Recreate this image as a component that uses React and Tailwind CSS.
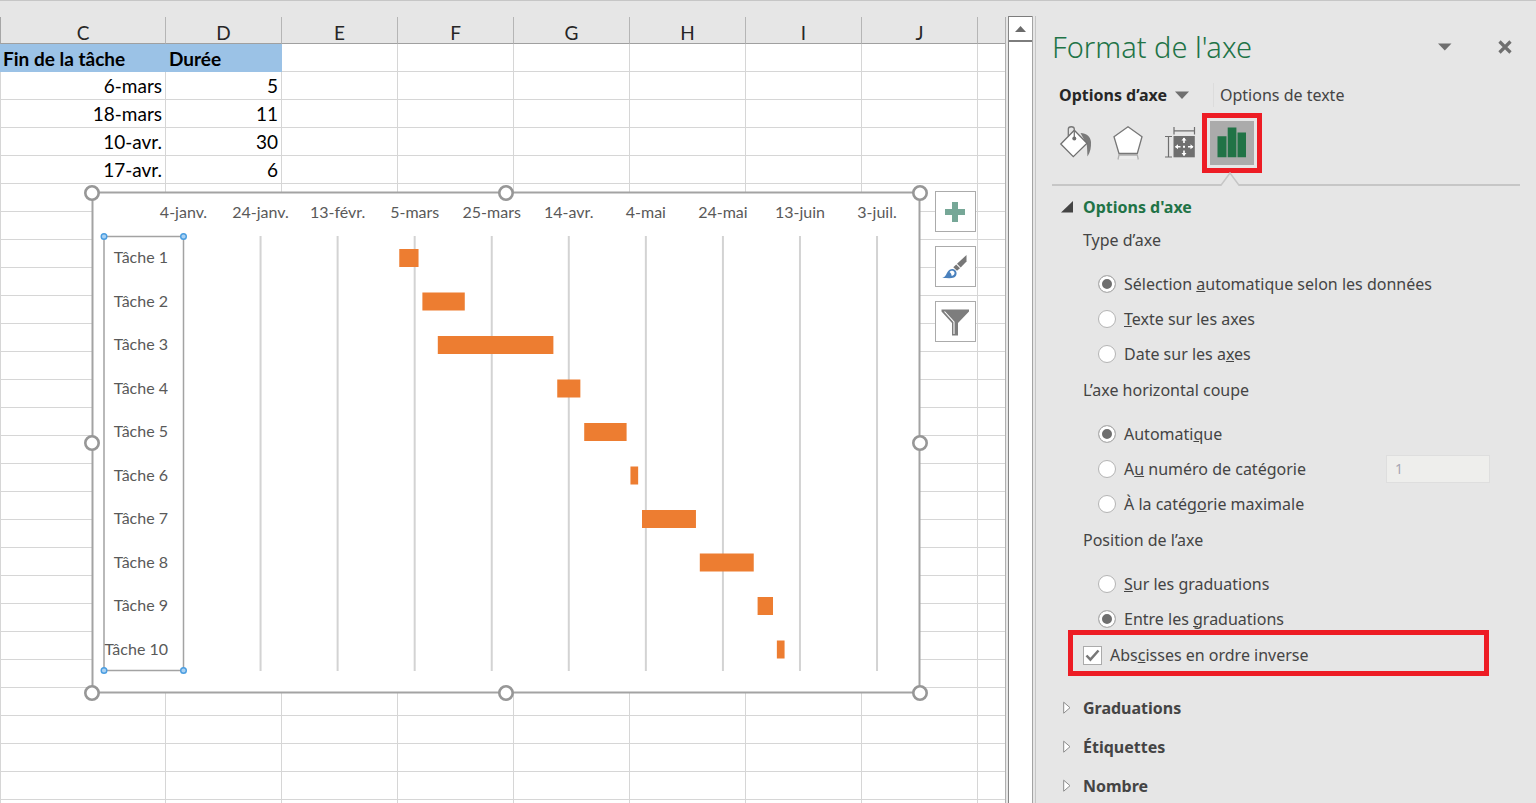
import { useState } from 'react'

const COLUMNS = ['C', 'D', 'E', 'F', 'G', 'H', 'I', 'J']
const ROWS = [
  ['6-mars', '5'],
  ['18-mars', '11'],
  ['10-avr.', '30'],
  ['17-avr.', '6'],
]
const EMPTY_ROWS = 23

const TICKS = ['4-janv.', '24-janv.', '13-févr.', '5-mars', '25-mars', '14-avr.', '4-mai', '24-mai', '13-juin', '3-juil.']

// start is counted in days from the first tick
const TASKS = [
  { name: 'Tâche 1', start: 56, days: 5 },
  { name: 'Tâche 2', start: 62, days: 11 },
  { name: 'Tâche 3', start: 66, days: 30 },
  { name: 'Tâche 4', start: 97, days: 6 },
  { name: 'Tâche 5', start: 104, days: 11 },
  { name: 'Tâche 6', start: 116, days: 2 },
  { name: 'Tâche 7', start: 119, days: 14 },
  { name: 'Tâche 8', start: 134, days: 14 },
  { name: 'Tâche 9', start: 149, days: 4 },
  { name: 'Tâche 10', start: 154, days: 2 },
]

const ORIGIN = 99.5
const DAY = 3.853
const ROW = 43.5

function Chart() {
  const handles = [
    [8, 9], [422, 9], [836, 9],
    [8, 259], [836, 259],
    [8, 509], [422, 509], [836, 509],
  ]

  return (
    <svg width="844" height="518" viewBox="0 0 844 518" className="shrink-0 font-['Lato',sans-serif] text-base">
      <rect x="8.5" y="8.5" width="827" height="500" fill="#fff" stroke="#a3a3a3" strokeWidth="2" />

      {TICKS.map((tick, i) => (
        <g key={tick}>
          {i > 0 && (
            <line x1={ORIGIN + i * 20 * DAY} x2={ORIGIN + i * 20 * DAY} y1="52" y2="487" stroke="#d3d3d3" strokeWidth="2" />
          )}
          <text x={ORIGIN + i * 20 * DAY} y="34" textAnchor="middle" fill="#595959">{tick}</text>
        </g>
      ))}

      <rect x="20" y="52.5" width="79.5" height="434" fill="none" stroke="#a3a3a3" strokeWidth="1.5" />
      {TASKS.map((task, i) => (
        <g key={task.name}>
          <text x="84" y={79 + i * ROW} textAnchor="end" fill="#595959">{task.name}</text>
          <rect x={ORIGIN + task.start * DAY} y={65 + i * ROW} width={task.days * DAY} height="18" fill="#ed7d31" />
        </g>
      ))}

      {[[20, 52.5], [99.5, 52.5], [20, 486.5], [99.5, 486.5]].map(([x, y]) => (
        <circle key={`${x}-${y}`} cx={x} cy={y} r="2.8" fill="#a9d1f3" stroke="#4a9de0" strokeWidth="1.4" />
      ))}
      {handles.map(([x, y]) => (
        <circle key={`${x}-${y}`} cx={x} cy={y} r="6.7" fill="#fff" stroke="#979797" strokeWidth="2.6" />
      ))}
    </svg>
  )
}

function ChartButton({ label, children }) {
  return (
    <button type="button" aria-label={label} className="size-[41px] border border-[#ababab] bg-white">
      <svg width="39" height="39" viewBox="0 0 39 39">{children}</svg>
    </button>
  )
}

function ChartButtons() {
  return (
    <div className="flex flex-col gap-[14px] pt-[7px]">
      <ChartButton label="Éléments de graphique">
        <path d="M16 10h6v7h7v6h-7v7h-6v-7H9v-6h7z" fill="#76a797" />
      </ChartButton>
      <ChartButton label="Styles du graphique">
        <path d="M30.5 8v6.500l-5.800 6-3.700-3.700z" fill="#777" />
        <path d="M20.200 17.500l3.800 3.800-3 2.400-3.700-3.500z" fill="#777" />
        <path d="M6.200 31c3.500-1 3.800-3.500 5.300-6 2-3.500 6-3.800 8-1.500 2 2.500 1 6-1.500 7-3 1.200-7 .5-11.800.5z" fill="#4a81bd" />
        <path d="M13.500 25c1.500-2 4.500-1.500 5 .5.300 1.800-1 3.300-2.800 3.500-.2-2-1-3.200-2.200-4z" fill="#fff" />
      </ChartButton>
      <ChartButton label="Filtres du graphique">
        <path d="M5.500 7.500h27.500v2L22 21v12.500h-6V21L5.500 9.500z" fill="#7d7d7d" />
        <path d="M8.500 9.500L18 20v12" fill="none" stroke="#fff" strokeWidth="1.100" />
      </ChartButton>
    </div>
  )
}

function Sheet() {
  return (
    <div className="relative min-w-0 flex-1 overflow-hidden pt-4">
      <table className="w-full table-fixed border-separate border-spacing-0 border-r border-[#b0b0b0] font-['Lato',sans-serif] text-[19px] leading-none text-black">
        <colgroup>
          <col className="w-[166px]" />
          {COLUMNS.slice(1).map((name) => <col key={name} className="w-[116px]" />)}
          <col />
        </colgroup>
        <thead>
          <tr className="h-[27px] text-[#262626]">
            {COLUMNS.map((name) => (
              <th key={name} scope="col" className="border-r border-b border-r-[#b5b5b5] border-b-[#a0a0a0] p-0 pt-1 font-normal first:border-l first:border-l-[#a6a6a6]">{name}</th>
            ))}
            <th className="border-b border-[#a0a0a0] p-0" />
          </tr>
        </thead>
        <tbody className="bg-white">
          <tr className="h-7 text-left">
            <th className="bg-[#9bc2e6] px-[3px] py-0 font-bold">Fin de la tâche</th>
            <th className="bg-[#9bc2e6] px-[3px] py-0 font-bold">Durée</th>
            {COLUMNS.slice(2).map((name) => <td key={name} className="border-r border-b border-[#d6d6d6]" />)}
            <td className="border-b border-[#d6d6d6]" />
          </tr>
          {ROWS.map(([end, days]) => (
            <tr key={end} className="h-7 text-right">
              <td className="border-r border-b border-[#d6d6d6] px-[3px] py-0 first:border-l">{end}</td>
              <td className="border-r border-b border-[#d6d6d6] px-[3px] py-0">{days}</td>
              {COLUMNS.slice(2).map((name) => <td key={name} className="border-r border-b border-[#d6d6d6]" />)}
              <td className="border-b border-[#d6d6d6]" />
            </tr>
          ))}
          {Array.from({ length: EMPTY_ROWS }, (_, i) => (
            <tr key={i} className="h-7">
              {COLUMNS.map((name) => <td key={name} className="border-r border-b border-[#d6d6d6] first:border-l" />)}
              <td className="border-b border-[#d6d6d6]" />
            </tr>
          ))}
        </tbody>
      </table>

      <div className="absolute top-[183px] left-[84px] flex gap-[7px]">
        <Chart />
        <ChartButtons />
      </div>
    </div>
  )
}

function Scrollbar() {
  return (
    <div className="mx-[2px] mt-[15px] flex w-[25px] shrink-0 flex-col border-x border-l-[#858585] border-r-[#a3a3a3] bg-white">
      <button type="button" aria-label="Défiler vers le haut" className="flex h-[26px] items-center justify-center border-t border-b-2 border-[#7d7d7d]">
        <svg width="11" height="6" viewBox="0 0 11 6"><path d="M0 6l5.500-6L11 6z" fill="#6b6b6b" /></svg>
      </button>
    </div>
  )
}

function PaneIcon({ label, active, children }) {
  return (
    <button type="button" aria-label={label} className={active ? 'size-11 bg-[#ababab]' : 'size-11'}>
      <svg width="44" height="44" viewBox="0 0 44 44">{children}</svg>
    </button>
  )
}

function PaneIcons() {
  return (
    <div className="flex gap-2 pl-[18px]">
      <PaneIcon label="Remplissage et trait">
        <path d="M26.500 12c6 .5 10 3 10.500 9 .2 5-.5 10-3.500 14.500-.3-4-.2-8-.8-12z" fill="#7a7a7a" />
        <path d="M20.300 9.300L33 22.300 19.300 35.700 6.800 23z" fill="#fff" stroke="#6f6f6f" strokeWidth="1.300" />
        <path d="M14.300 15V8c0-3 6-3 6 0v9" fill="none" stroke="#777" strokeWidth="1.300" />
        <circle cx="20.300" cy="17.500" r="2" fill="#6f6f6f" />
      </PaneIcon>
      <PaneIcon label="Effets">
        <path d="M13 34.500h18.500l.8 3.500H12z" fill="#ececec" />
        <path d="M12.500 34h19M13 34l-1 4.500M31.300 34l1 4.500" fill="none" stroke="#b0b0b0" strokeWidth="1.300" />
        <path d="M22 5.800l14 10-4.700 16.700H13L8 15.800z" fill="#fff" stroke="#777" strokeWidth="1.300" />
      </PaneIcon>
      <PaneIcon label="Taille et propriétés">
        <path d="M16 6v7.500M36.500 6v7.500M16 9.800h20.500M7 15.500h7M7 36h7M10.500 15.500V36" fill="none" stroke="#6f6f6f" strokeWidth="1.200" />
        <rect x="15.500" y="15" width="21.300" height="21.300" fill="#6f6f6f" />
        <path d="M26 17v5M26 29.500v5M17.500 25.700h5M30 25.700h5" stroke="#fff" strokeWidth="1.600" />
        <path d="M26 16.500l2.500 3h-5zM26 35l2.500-3h-5zM17 25.700l3-2.500v5zM35.500 25.700l-3-2.500v5z" fill="#fff" />
        <path d="M25 24.700h2v2h-2z" fill="#fff" />
      </PaneIcon>
      <div className="relative size-11">
        <PaneIcon label="Options d’axe" active>
          <path d="M7.500 15.300h9v21h-9zM17.700 6.500h8.700v29.800h-8.700zM27.500 11.500H36v24.800h-8.500z" fill="#217346" />
        </PaneIcon>
        <span className="pointer-events-none absolute -inset-2 border-[5px] border-[#ed1c24]" />
      </div>
    </div>
  )
}

function Radio({ name, value, selected, onSelect, children }) {
  return (
    <label className="flex h-[35px] items-center gap-2">
      <input
        type="radio"
        name={name}
        checked={selected === value}
        onChange={() => onSelect(value)}
        className="size-[18px] appearance-none rounded-full border border-[#b4b4b4] bg-white checked:bg-[#6f6f6f] checked:shadow-[inset_0_0_0_3px_#fff]"
      />
      <span>{children}</span>
    </label>
  )
}

function Group({ title, children }) {
  return (
    <fieldset className="pl-[47px]">
      <legend className="h-9 leading-9">{title}</legend>
      <div className="pt-2 pb-px pl-[15px]">{children}</div>
    </fieldset>
  )
}

function Collapsed({ title }) {
  return (
    <button type="button" className="flex h-[39px] w-full items-center gap-3 pl-[27px] font-bold">
      <svg width="8" height="14" viewBox="0 0 8 14"><path d="M.7 1.200v11L7 6.700z" fill="#fff" stroke="#8c8c8c" /></svg>
      {title}
    </button>
  )
}

function FormatPane() {
  const [type, setType] = useState('auto')
  const [cross, setCross] = useState('auto')
  const [position, setPosition] = useState('between')
  const [reversed, setReversed] = useState(true)

  return (
    <aside className="mt-[15px] w-[501px] shrink-0 overflow-hidden border-l border-[#c6c6c6] font-['Noto_Sans','Open_Sans',sans-serif] text-base text-[#444]">
      <header className="flex h-[62px] items-center pr-6 pl-4">
        <h1 className="flex-1 text-[29px] font-light text-[#217346]">Format de l'axe</h1>
        <button type="button" aria-label="Options du volet" className="mr-[46px]">
          <svg width="14" height="8" viewBox="0 0 14 8"><path d="M0 .5h13.500L6.800 7.500z" fill="#6f6f6f" /></svg>
        </button>
        <button type="button" aria-label="Fermer">
          <svg width="14" height="14" viewBox="0 0 14 14"><path d="M1.500 1.500l11 11M12.500 1.500l-11 11" stroke="#6f6f6f" strokeWidth="3.200" /></svg>
        </button>
      </header>

      <div className="flex h-[34px] items-center pl-[23px] text-[#262626]">
        <button type="button" className="flex w-[155px] items-center gap-2 border-r border-[#dcdcdc] font-bold">
          Options d’axe
          <svg width="14" height="8" viewBox="0 0 14 8"><path d="M0 .5h14L7 8z" fill="#6f6f6f" /></svg>
        </button>
        <button type="button" className="pl-[6px] text-[#444]">Options de texte</button>
      </div>

      <div className="relative mr-4 ml-4 h-[74px] border-b-2 border-[#c6c6c6]">
        <div className="-ml-4 pt-[9px]"><PaneIcons /></div>
        <svg width="20" height="14" viewBox="0 0 20 14" className="absolute -bottom-[2px] left-[168px]">
          <path d="M1 13L10 1l9 12v1H1z" fill="#e6e6e6" />
          <path d="M0 13.200h1L10 1l9 12.200h1" fill="none" stroke="#c6c6c6" strokeWidth="1.500" />
        </svg>
      </div>

      <button type="button" className="mt-[6px] flex h-[30px] items-center gap-[10px] pl-[25px] font-bold text-[#217346]">
        <svg width="12" height="12" viewBox="0 0 12 12"><path d="M12 0v11.500H0z" fill="#444" /></svg>
        Options d'axe
      </button>

      <Group title="Type d’axe">
        <Radio name="type" value="auto" selected={type} onSelect={setType}>Sélection <u>a</u>utomatique selon les données</Radio>
        <Radio name="type" value="text" selected={type} onSelect={setType}><u>T</u>exte sur les axes</Radio>
        <Radio name="type" value="date" selected={type} onSelect={setType}>Date sur les a<u>x</u>es</Radio>
      </Group>

      <Group title="L’axe horizontal coupe">
        <Radio name="cross" value="auto" selected={cross} onSelect={setCross}>Automati<u>q</u>ue</Radio>
        <div className="flex items-center justify-between pr-[46px]">
          <Radio name="cross" value="number" selected={cross} onSelect={setCross}>A<u>u</u> numéro de catégorie</Radio>
          <input
            type="text"
            aria-label="Numéro de catégorie"
            defaultValue="1"
            disabled
            className="h-7 w-[104px] border border-[#dedede] bg-[#eeeeec] px-2 text-sm text-[#a6a6b4]"
          />
        </div>
        <Radio name="cross" value="max" selected={cross} onSelect={setCross}>À la catég<u>o</u>rie maximale</Radio>
      </Group>

      <Group title="Position de l’axe">
        <Radio name="position" value="on" selected={position} onSelect={setPosition}><u>S</u>ur les graduations</Radio>
        <Radio name="position" value="between" selected={position} onSelect={setPosition}>Entre les <u>g</u>raduations</Radio>
      </Group>

      <div className="relative mr-[47px] mb-[15px] ml-8">
        <label className="flex h-9 items-center gap-2 pl-[15px]">
          <span className="grid">
            <input
              type="checkbox"
              checked={reversed}
              onChange={(e) => setReversed(e.target.checked)}
              className="col-start-1 row-start-1 size-[19px] appearance-none border border-[#ababab] bg-white"
            />
            {reversed && (
              <svg width="19" height="19" viewBox="0 0 19 19" className="pointer-events-none col-start-1 row-start-1">
                <path d="M3.500 9.500l3.900 4.200L15.500 4.500" fill="none" stroke="#777" strokeWidth="2.500" />
              </svg>
            )}
          </span>
          <span>Abs<u>c</u>isses en ordre inverse</span>
        </label>
        <span className="pointer-events-none absolute inset-x-0 -top-[7px] -bottom-[3px] border-[5px] border-[#ed1c24]" />
      </div>

      <Collapsed title="Graduations" />
      <Collapsed title="Étiquettes" />
      <Collapsed title="Nombre" />
    </aside>
  )
}

export default function App() {
  return (
    <main className="flex h-screen overflow-hidden border-t border-[#c6c6c6] bg-[#e6e6e6]">
      <Sheet />
      <Scrollbar />
      <FormatPane />
    </main>
  )
}
